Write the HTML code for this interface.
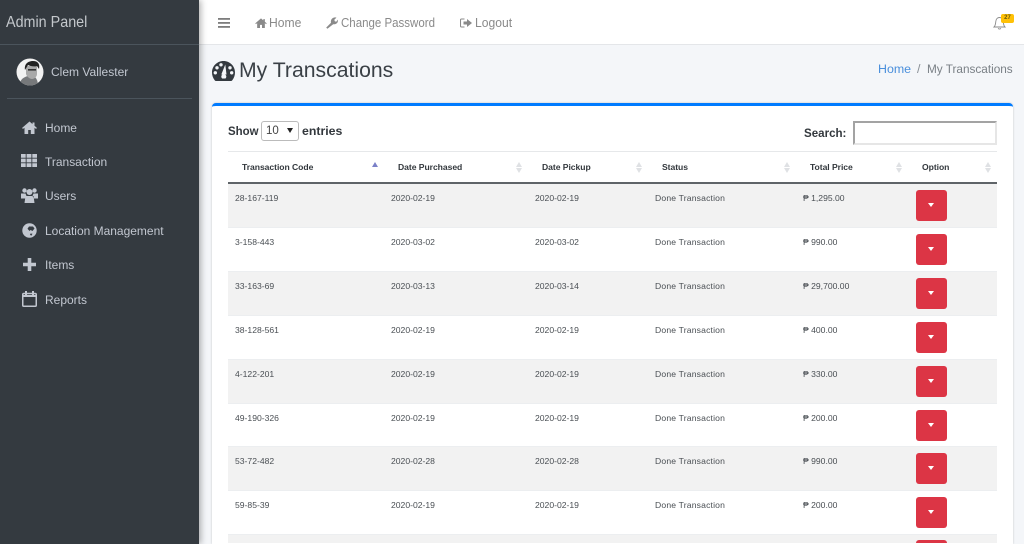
<!DOCTYPE html>
<html lang="en">
<head>
<meta charset="utf-8">
<title>My Transcations</title>
<style>
html,body{margin:0;padding:0;width:1024px;height:544px;overflow:hidden}
body{background:#f4f6f9;font-family:"Liberation Sans",Arial,sans-serif;color:#212529}
#page{position:relative;width:1024px;height:544px;overflow:hidden;background:#f4f6f9}
*{box-sizing:border-box}
a{text-decoration:none;color:inherit}
.abs,svg.i{position:absolute}
aside{position:absolute;left:0;top:0;width:199px;height:544px;background:#343a40;box-shadow:2px 0 6px rgba(0,0,0,.3);z-index:3;color:#c2c7d0}
.brand{position:absolute;left:6px;top:13px;font-size:15.6px;line-height:20px;color:#c4c8cc;transform:scaleX(.92);transform-origin:0 50%;white-space:nowrap}
.b1{position:absolute;left:0;right:0;top:44px;height:1px;background:#4b545c}
.b2{position:absolute;left:7px;width:185px;top:98px;height:1px;background:#4b545c}
.uname{position:absolute;left:51px;top:64px;font-size:12.4px;line-height:16px;color:#c2c7d0;transform:scaleX(.97);transform-origin:0 50%;white-space:nowrap}
.nav{position:absolute;left:45px;font-size:12.4px;line-height:16px;color:#c2c7d0;white-space:nowrap;transform:scaleX(.967);transform-origin:0 50%}
header{position:absolute;left:199px;top:0;width:825px;height:45px;background:#fff;border-bottom:1px solid #e4e6e9}
.tl{position:absolute;top:15px;font-size:12.5px;line-height:16px;color:#8a8a8a;white-space:nowrap;transform-origin:0 50%}
h1{position:absolute;left:239px;top:57px;margin:0;font-size:21.2px;line-height:28px;font-weight:400;color:#3a4046;white-space:nowrap}
.crumb{position:absolute;top:61px;font-size:12.4px;line-height:16px;white-space:nowrap;transform-origin:0 50%}
.card{position:absolute;left:212px;top:103px;width:801px;height:441px;background:#fff;border-top:3px solid #007bff;border-radius:4px 4px 0 0;box-shadow:0 0 2px rgba(0,0,0,.2)}
.lbl{position:absolute;font-size:12.3px;line-height:16px;font-weight:700;color:#33383d;white-space:nowrap;transform-origin:0 50%}
.sel{position:absolute;left:261px;top:121px;width:38px;height:20px;background:#fff;border:1px solid #bbb;border-radius:3px;font-size:11.5px;line-height:18px;padding-left:4px;color:#444}
.sel:after{content:"";position:absolute;right:5px;top:6px;border-left:3.5px solid transparent;border-right:3.5px solid transparent;border-top:5px solid #222}
.inp{position:absolute;left:853px;top:121px;width:144px;height:24px;background:#fff;border:2px solid;border-color:#a3a3a3 #e6e6e6 #e6e6e6 #a3a3a3}
.wrap{position:absolute;left:228px;top:151px;width:769px;height:393px;overflow:hidden}
table{width:769px;border-collapse:collapse;table-layout:fixed;font-size:8.6px}
th{height:31px;padding:0 0 0 14px;border-top:1px solid #e6e8ea;border-bottom:2px solid #5f6468;text-align:left;font-size:8.6px;line-height:12px;color:#33383d;position:relative;letter-spacing:-.05px;white-space:nowrap}
td{height:44px;padding:8px 0 0 7px;vertical-align:top;line-height:12px;color:#4a4f54;border-bottom:1px solid #eceef0;white-space:nowrap}
tbody tr:nth-child(1) td{height:45px}
tbody tr:nth-child(6) td{height:43px}
tbody tr.last td{height:8px;padding:0;border-bottom:0;line-height:0;font-size:0}
td.s{letter-spacing:.17px}
tbody tr:nth-child(odd) td{background:#f2f2f2}
th i{position:absolute;right:5px;top:10px;width:7px;height:12px}
th i:before,th i:after{content:"";position:absolute;left:0;border-left:3.5px solid transparent;border-right:3.5px solid transparent}
th i:before{top:0;border-bottom:5px solid #dfe1e4}
th i:after{bottom:1px;border-top:5px solid #dfe1e4}
th i.up:before{border-bottom-color:#7a80c8}
th i.up:after{border-top-color:#fff}
.btn{display:block;position:relative;width:31px;height:31px;margin:-2px 0 0 1px;background:#dc3545;border-radius:3px}
.btn:after{content:"";position:absolute;left:12px;top:13px;border-left:3.5px solid transparent;border-right:3.5px solid transparent;border-top:4px solid #fff}
a.stub{display:block;width:31px;height:3px;margin:5px 0 0 8px;background:#dc3545;border-radius:3px 3px 0 0}
</style>
</head>
<body>
<div id="page">
<aside>
  <a class="brand" href="#">Admin Panel</a>
  <div class="b1"></div>
  <svg class="i" style="left:16px;top:58px" width="28" height="28" viewBox="0 0 28 28">
    <defs><clipPath id="av"><circle cx="14" cy="14" r="13.5"/></clipPath></defs>
    <circle cx="14" cy="14" r="13.5" fill="#f2f2f2"/>
    <g clip-path="url(#av)">
      <path d="M3 28c1-7 5-9 9-10l7 1c2 2 3 5 3 9z" fill="#77797b"/>
      <path d="M10 8h11v8c0 3-3 5-5 5s-5-2-6-5z" fill="#a9a9a9"/>
      <path d="M9 12c-1-6 3-9 8-9s7 3 6 8l-2-3c-3 1-7 0-9-1z" fill="#222"/>
      <rect x="12" y="11" width="8" height="1.6" fill="#333"/>
    </g>
  </svg>
  <div class="uname">Clem Vallester</div>
  <div class="b2"></div>

  <svg class="i" style="left:22px;top:121px" width="15" height="13" viewBox="0 0 15 13" fill="#c2c7d0"><path d="M7.500.5 0 7l1 .9 1.500-1.200V13H6.200V9h2.600v4h3.700V6.700L14 7.900l1-.9-2.500-2.200V1.500h-2v1.600z"/></svg>
  <a class="nav" style="top:120px" href="#">Home</a>

  <svg class="i" style="left:21px;top:154px" width="16" height="13" viewBox="0 0 16 13" fill="#c2c7d0"><path d="M0 0h4.700v3.800H0zM5.600 0h4.800v3.800H5.600zM11.300 0H16v3.800h-4.700zM0 4.600h4.700v3.800H0zM5.600 4.600h4.800v3.800H5.600zM11.300 4.600H16v3.800h-4.700zM0 9.200h4.700V13H0zM5.600 9.200h4.800V13H5.600zM11.300 9.200H16V13h-4.700z"/></svg>
  <a class="nav" style="top:154px" href="#">Transaction</a>

  <svg class="i" style="left:21px;top:188px" width="17" height="15" viewBox="0 0 17 15" fill="#c2c7d0"><circle cx="3.500" cy="2.500" r="2.200"/><circle cx="13.500" cy="2.500" r="2.200"/><circle cx="8.500" cy="4" r="3"/><path d="M0 5.500h4.500l1 2.500-1.500 2.500H0zM17 5.500h-4.500l-1 2.500 1.500 2.500h4zM4.500 8h8l1 7h-10z"/></svg>
  <a class="nav" style="top:188px" href="#">Users</a>

  <svg class="i" style="left:22px;top:223px" width="15" height="15" viewBox="0 0 15 15"><circle cx="7.500" cy="7.500" r="7.200" fill="#c2c7d0"/><path d="M7 3.500h4l1.500 2-2 2.500-2-1-1 1-2-2.200zM8.500 10.500l2 .3-1.200 2-1.300-1z" fill="#343a40"/></svg>
  <a class="nav" style="top:223px" href="#">Location Management</a>

  <svg class="i" style="left:23px;top:258px" width="13" height="13" viewBox="0 0 13 13" fill="#c2c7d0"><path d="M4.700 0h3.600v4.700H13v3.600H8.300V13H4.700V8.300H0V4.700h4.700z"/></svg>
  <a class="nav" style="top:257px" href="#">Items</a>

  <svg class="i" style="left:22px;top:291px" width="15" height="16" viewBox="0 0 15 16" fill="none" stroke="#c2c7d0"><rect x=".75" y="2.500" width="13.500" height="12.700" rx="1" stroke-width="1.500"/><path d="M1 4h13v2H1z" fill="#c2c7d0" stroke="none"/><path d="M4 0v4M11 0v4" stroke-width="2"/></svg>
  <a class="nav" style="top:292px" href="#">Reports</a>
</aside>

<header></header>
<svg class="i" style="left:218px;top:18px" width="12" height="10" viewBox="0 0 12 10" fill="#7d7d7d"><rect width="12" height="1.800" y="0"/><rect width="12" height="1.800" y="4"/><rect width="12" height="1.800" y="8"/></svg>
<svg class="i" style="left:255px;top:18px" width="12" height="10" viewBox="0 0 15 13" fill="#8a8a8a"><path d="M7.500.5 0 7l1 .9 1.500-1.200V13H6.200V9h2.600v4h3.700V6.700L14 7.900l1-.9-2.500-2.200V1.500h-2v1.600z"/></svg>
<a class="tl" style="left:269px;transform:scaleX(.97)" href="#">Home</a>
<svg class="i" style="left:326px;top:17px" width="12" height="12" viewBox="0 0 12 12" fill="#8a8a8a"><path d="M1.400 11.800.200 10.600 5 5.800C4.400 3.600 5.600.8 8.800.4c.6-.1 1.200 0 1.700.2L8.300 2.800l.5 1.400 1.400.500 1.600-2.100c.6 2.800-1.300 5-4.600 4.600z"/></svg>
<a class="tl" style="left:341px;transform:scaleX(.92)" href="#">Change Password</a>
<svg class="i" style="left:460px;top:18px" width="12" height="10" viewBox="0 0 12 10"><path d="M4.500 1H1.500a1 1 0 0 0-1 1v6a1 1 0 0 0 1 1h3" fill="none" stroke="#8a8a8a" stroke-width="1.100"/><path d="M3.500 3.500h3.500V1L12 5 7 9V6.500H3.500z" fill="#8a8a8a"/></svg>
<a class="tl" style="left:475px;transform:scaleX(.97)" href="#">Logout</a>
<svg class="i" style="left:993px;top:16px" width="13" height="14" viewBox="0 0 13 14" fill="none" stroke="#8a8a8a" stroke-width=".9"><path d="M1 11c1.500-1.500 1.500-3 1.800-5.500C3 3 4.500 1.500 6.500 1.500S10 3 10.200 5.500C10.500 8 10.500 9.500 12 11z"/><path d="M5.200 12.200c.4 1.200 2.200 1.200 2.600 0"/></svg>
<div class="abs" style="left:1001px;top:14px;width:13px;height:9px;background:#ffc107;border-radius:2px;font-size:6px;line-height:8px;font-weight:700;text-align:center;color:#6b5a10">27</div>

<svg class="i" style="left:212px;top:61px" width="23" height="20" viewBox="0 0 23 20">
  <path fill="#343a40" d="M11.500 0C5.100 0 0 5.100 0 11.500c0 2.900 1 5.700 2.700 7.700.4.500 1 .8 1.600.8h14.400c.6 0 1.200-.3 1.600-.8 1.700-2 2.700-4.800 2.700-7.700C23 5.100 17.900 0 11.500 0z"/>
  <g fill="#f4f6f9"><circle cx="9" cy="3.800" r="1.700"/><circle cx="5" cy="6.800" r="1.700"/><circle cx="18" cy="6.800" r="1.700"/><circle cx="3.300" cy="11.800" r="1.700"/><circle cx="19.700" cy="11.800" r="1.700"/><path d="M13.300 3.500 14.500 13.500H9.300z"/></g>
  <circle cx="11.800" cy="15.600" r="2.500" fill="#f4f6f9"/>
  <path d="M6.500 17.500h10V20h-10z" fill="#343a40"/>
</svg>
<h1>My Transcations</h1>
<div class="crumb" style="left:878px;color:#4a8fdc">Home</div>
<div class="crumb" style="left:917px;color:#8a9096">/</div>
<div class="crumb" style="left:927px;color:#7a8086;transform:scaleX(.95)">My Transcations</div>

<section class="card"></section>
<div class="lbl" style="left:228px;top:123px;transform:scaleX(.93)">Show</div>
<div class="sel">10</div>
<div class="lbl" style="left:302px;top:123px">entries</div>
<div class="lbl" style="left:804px;top:125px;transform:scaleX(.94)">Search:</div>
<div class="inp"></div>

<div class="wrap">
<table>
<colgroup><col style="width:156px"><col style="width:144px"><col style="width:120px"><col style="width:148px"><col style="width:112px"><col style="width:89px"></colgroup>
<thead><tr>
<th>Transaction Code<i class="up"></i></th>
<th>Date Purchased<i></i></th>
<th>Date Pickup<i></i></th>
<th>Status<i></i></th>
<th>Total Price<i></i></th>
<th>Option<i></i></th>
</tr></thead>
<tbody>
<tr><td>28-167-119</td><td>2020-02-19</td><td>2020-02-19</td><td class="s">Done Transaction</td><td>₱ 1,295.00</td><td><a class="btn" href="#"></a></td></tr>
<tr><td>3-158-443</td><td>2020-03-02</td><td>2020-03-02</td><td class="s">Done Transaction</td><td>₱ 990.00</td><td><a class="btn" href="#"></a></td></tr>
<tr><td>33-163-69</td><td>2020-03-13</td><td>2020-03-14</td><td class="s">Done Transaction</td><td>₱ 29,700.00</td><td><a class="btn" href="#"></a></td></tr>
<tr><td>38-128-561</td><td>2020-02-19</td><td>2020-02-19</td><td class="s">Done Transaction</td><td>₱ 400.00</td><td><a class="btn" href="#"></a></td></tr>
<tr><td>4-122-201</td><td>2020-02-19</td><td>2020-02-19</td><td class="s">Done Transaction</td><td>₱ 330.00</td><td><a class="btn" href="#"></a></td></tr>
<tr><td>49-190-326</td><td>2020-02-19</td><td>2020-02-19</td><td class="s">Done Transaction</td><td>₱ 200.00</td><td><a class="btn" href="#"></a></td></tr>
<tr><td>53-72-482</td><td>2020-02-28</td><td>2020-02-28</td><td class="s">Done Transaction</td><td>₱ 990.00</td><td><a class="btn" href="#"></a></td></tr>
<tr><td>59-85-39</td><td>2020-02-19</td><td>2020-02-19</td><td class="s">Done Transaction</td><td>₱ 200.00</td><td><a class="btn" href="#"></a></td></tr>
<tr class="last"><td></td><td></td><td></td><td></td><td></td><td><a class="stub" href="#"></a></td></tr>
</tbody>
</table>
</div>
</div>
</body>
</html>
